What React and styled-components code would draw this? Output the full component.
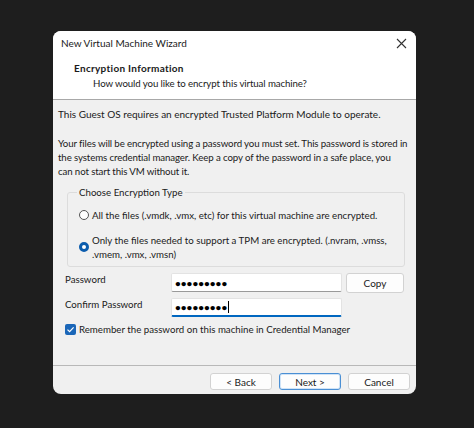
import React from "react";
import styled, { createGlobalStyle } from "styled-components";

const GlobalStyle = createGlobalStyle`
  body {
    margin: 0;
    background: #1e1e1e;
    font-family: Lato, "Noto Sans", sans-serif;
  }
  #root {
    padding: 31px 0 0 53px;
    height: 397px;
  }
`;

const Window = styled.div`
  width: 363px;
  height: 363px;
  border-radius: 8px;
  overflow: hidden;
  background: #f0f0f0;
  display: flex;
  flex-direction: column;
  font-size: 9.7px;
  color: #1a1a1a;
  white-space: nowrap;
`;

const Header = styled.div`
  background: #ffffff;
  height: 68px;
  border-bottom: 1px solid #a8a8a8;
  display: flex;
  flex-direction: column;
`;

const TitleBar = styled.div`
  height: 24px;
  display: flex;
  align-items: center;
  justify-content: space-between;
  padding: 0 8px;
  font-size: 10px;
`;

const CloseButton = styled.button`
  border: none;
  background: none;
  padding: 0;
  width: 14px;
  height: 14px;
  display: flex;
  align-items: center;
  justify-content: center;
`;

const StepTitle = styled.div`
  font-weight: 700;
  padding-left: 21px;
  margin-top: 7px;
  line-height: 13px;
  font-size: 10px;
  letter-spacing: 0.3px;
`;

const StepSubtitle = styled.div`
  padding-left: 40px;
  margin-top: 2px;
  line-height: 13px;
  letter-spacing: -0.1px;
`;

const Body = styled.div`
  flex: 1;
  padding: 7px 5px 0 5px;
  display: flex;
  flex-direction: column;
`;

const Paragraph = styled.p`
  margin: 0 0 ${(p) => p.$gap || 0}px;
  line-height: 14px;
  font-size: ${(p) => p.$size || 9.7}px;
  letter-spacing: ${(p) => p.$track || 0}px;
`;

const GroupBox = styled.fieldset`
  margin: 8px 0 0 9px;
  width: 338px;
  height: 81px;
  box-sizing: border-box;
  border: 1px solid #dcdcdc;
  border-radius: 3px;
  padding: 10px 0 0 11px;
  legend {
    padding: 0 2px;
    margin-left: -2px;
    line-height: 12px;
  }
`;

const RadioRow = styled.label`
  display: flex;
  align-items: center;
  gap: 3px;
  line-height: 14px;
  margin-bottom: ${(p) => p.$gap || 0}px;
`;

const RadioDot = styled.span`
  width: 10px;
  height: 10px;
  border-radius: 50%;
  box-sizing: border-box;
  flex: none;
  border: ${(p) => (p.$on ? "3px solid #0b5cad" : "1px solid #555")};
  background: #fff;
`;

const FieldGrid = styled.div`
  display: grid;
  grid-template-columns: 102px 171px 58px;
  column-gap: 4px;
  row-gap: 5px;
  margin-top: 6px;
  padding-left: 7px;
  align-items: start;
`;

const FieldLabel = styled.div`
  line-height: 12px;
`;

const PasswordBox = styled.div`
  height: 19px;
  background: #fff;
  border: 1px solid #e3e3e3;
  border-bottom: ${(p) => (p.$focus ? "2px solid #0067c0" : "1px solid #9a9a9a")};
  box-sizing: border-box;
  border-radius: 2px;
  display: flex;
  align-items: center;
  padding-left: 3px;
  font-size: 10px;
  font-weight: 700;
  color: #000;
`;

const Caret = styled.span`
  display: inline-block;
  width: 1px;
  height: 12px;
  background: #000;
  margin-left: 1px;
`;

const PushButton = styled.button`
  height: ${(p) => p.$h || 17}px;
  width: ${(p) => p.$w || 62}px;
  box-sizing: border-box;
  border: 1px solid ${(p) => (p.$default ? "#4a8fd4" : "#d2d2d2")};
  border-radius: 3px;
  background: #fdfdfd;
  font-family: inherit;
  font-size: 10px;
  color: #1a1a1a;
  padding: 0;
  box-shadow: ${(p) => (p.$default ? "inset 0 0 0 1px #cfe3f7" : "none")};
`;

const CheckRow = styled.label`
  display: flex;
  align-items: center;
  gap: 3px;
  margin: 6px 0 0 7px;
  line-height: 12px;
`;

const CheckBox = styled.span`
  width: 11px;
  height: 11px;
  border-radius: 2px;
  background: #1a66b8;
  display: flex;
  align-items: center;
  justify-content: center;
  flex: none;
`;

const Footer = styled.div`
  height: 29px;
  border-top: 1px solid #b8b8b8;
  display: flex;
  justify-content: flex-end;
  align-items: flex-start;
  gap: 7px;
  padding: 7px 6px 0 0;
  box-sizing: border-box;
`;

export default function App() {
  return (
    <>
      <GlobalStyle />
      <Window>
        <Header>
          <TitleBar>
            <span>New Virtual Machine Wizard</span>
            <CloseButton aria-label="Close">
              <svg width="11" height="11" viewBox="0 0 11 11">
                <path d="M1 1L10 10M10 1L1 10" stroke="#333" strokeWidth="1.1" />
              </svg>
            </CloseButton>
          </TitleBar>
          <StepTitle>Encryption Information</StepTitle>
          <StepSubtitle>How would you like to encrypt this virtual machine?</StepSubtitle>
        </Header>
        <Body>
          <Paragraph $gap={15} $size={10}>
            This Guest OS requires an encrypted Trusted Platform Module to operate.
          </Paragraph>
          <Paragraph $track={-0.12}>
            Your files will be encrypted using a password you must set. This password is stored in
            <br />
            the systems credential manager. Keep a copy of the password in a safe place, you
            <br />
            can not start this VM without it.
          </Paragraph>
          <GroupBox>
            <legend>Choose Encryption Type</legend>
            <RadioRow $gap={11}>
              <RadioDot />
              <span>All the files (.vmdk, .vmx, etc) for this virtual machine are encrypted.</span>
            </RadioRow>
            <RadioRow>
              <RadioDot $on />
              <span>
                Only the files needed to support a TPM are encrypted. (.nvram, .vmss,
                <br />
                .vmem, .vmx, .vmsn)
              </span>
            </RadioRow>
          </GroupBox>
          <FieldGrid>
            <FieldLabel>Password</FieldLabel>
            <PasswordBox>•••••••••</PasswordBox>
            <PushButton $h={20} $w={58}>Copy</PushButton>
            <FieldLabel>Confirm Password</FieldLabel>
            <PasswordBox $focus>
              •••••••••
              <Caret />
            </PasswordBox>
            <span />
          </FieldGrid>
          <CheckRow>
            <CheckBox>
              <svg width="9" height="9" viewBox="0 0 9 9">
                <path d="M1.5 4.6L3.6 6.7L7.6 2.4" stroke="#fff" strokeWidth="1.2" fill="none" />
              </svg>
            </CheckBox>
            <span>Remember the password on this machine in Credential Manager</span>
          </CheckRow>
        </Body>
        <Footer>
          <PushButton>&lt; Back</PushButton>
          <PushButton $default>Next &gt;</PushButton>
          <PushButton>Cancel</PushButton>
        </Footer>
      </Window>
    </>
  );
}
